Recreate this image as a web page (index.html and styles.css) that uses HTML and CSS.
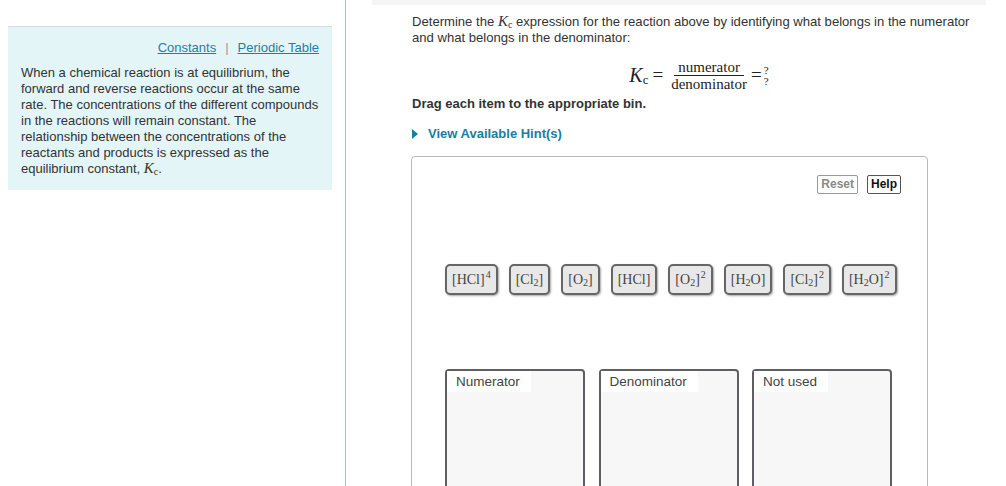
FILE: index.html
```html
<!DOCTYPE html>
<html>
<head>
<meta charset="utf-8">
<link rel="stylesheet" href="styles.css">
</head>
<body>
<div class="page">
  <aside class="left">
    <div class="info">
      <div class="links"><a href="#">Constants</a><span class="sep">|</span><a href="#">Periodic Table</a></div>
      <p class="intro">When a chemical reaction is at equilibrium, the forward and reverse reactions occur at the same rate. The concentrations of the different compounds in the reactions will remain constant. The relationship between the concentrations of the reactants and products is expressed as the equilibrium constant, <span class="m"><i>K</i><sub>c</sub></span>.</p>
    </div>
  </aside>
  <main class="right">
    <div class="topbar"></div>
    <div class="content">
      <p class="q">Determine the <span class="m"><i>K</i><sub>c</sub></span> expression for the reaction above by identifying what belongs in the numerator and what belongs in the denominator:</p>
      <div class="formula">
        <span class="m big"><i>K</i><sub>c</sub></span><span class="eq">=</span>
        <span class="frac"><span class="num">numerator</span><span class="den">denominator</span></span>
        <span class="eq">=</span>
        <span class="frac small"><span class="num">?</span><span class="den">?</span></span>
      </div>
      <p class="drag">Drag each item to the appropriate bin.</p>
      <div class="hint"><span class="tri"></span>View Available Hint(s)</div>
      <div class="dnd">
        <div class="tools"><button class="btn reset">Reset</button><button class="btn help">Help</button></div>
        <div class="items">
          <span class="item">[HCl]<sup>4</sup></span>
          <span class="item">[Cl<sub>2</sub>]</span>
          <span class="item">[O<sub>2</sub>]</span>
          <span class="item">[HCl]</span>
          <span class="item">[O<sub>2</sub>]<sup>2</sup></span>
          <span class="item">[H<sub>2</sub>O]</span>
          <span class="item">[Cl<sub>2</sub>]<sup>2</sup></span>
          <span class="item">[H<sub>2</sub>O]<sup>2</sup></span>
        </div>
        <div class="bins">
          <div class="bin"><span class="label">Numerator</span></div>
          <div class="bin"><span class="label">Denominator</span></div>
          <div class="bin"><span class="label">Not used</span></div>
        </div>
      </div>
    </div>
  </main>
</div>
</body>
</html>
```

FILE: styles.css
```css
* { box-sizing: border-box; }
html, body { margin: 0; padding: 0; background: #fff; }
body { font-family: "Liberation Sans", Arial, sans-serif; font-size: 13px; color: #333; }
.page { display: flex; height: 486px; overflow: hidden; }
.left { width: 346px; flex: none; border-right: 1px solid #b3bfd3; padding: 26px 13px 0 8px; }
.info { background: #e4f5f7; border-top: 1px solid #d6dde0; padding: 13px 13px 13px 13px; }
.links { text-align: right; line-height: 16px; margin-bottom: 9px; }
.links a { color: #1f7ea6; text-decoration: underline; }
.sep { color: #999; margin: 0 9px; }
.intro { margin: 0; line-height: 16px; color: #333; }
.m { font-family: "Liberation Serif", "DejaVu Serif", serif; font-size: 15px; line-height: 0; }
.m i { font-style: italic; }
.m sub { font-size: 10px; font-style: normal; vertical-align: -2px; line-height: 0; }
.right { flex: 1; min-width: 0; }
.topbar { margin-left: 26px; width: 614px; height: 5px; background: #f5f5f5; }
.content { padding-left: 66px; width: 640px; }
.q { margin: 9px 0 0 0; line-height: 16px; font-size: 13.1px; }
.formula { display: flex; align-items: center; justify-content: center; height: 32px; margin-top: 13px; font-family: "Liberation Serif", "DejaVu Serif", serif; color: #222; }
.formula .big { font-size: 20px; line-height: 1; }
.formula .big sub { font-size: 13px; }
.eq { font-size: 19px; margin: 0 6px 0 4px; }
.frac { display: inline-flex; flex-direction: column; align-items: center; font-size: 15px; line-height: 14px; margin-left: 2px; }
.frac .num { border-bottom: 1px solid #222; padding: 0 4px 1px; }
.frac .den { padding-top: 1px; }
.frac.small { font-size: 11px; line-height: 10px; margin-left: -4px; }
.frac.small .num { border-bottom: none; padding: 0; }
.drag { margin: 5px 0 0 0; font-weight: bold; line-height: 16px; }
.hint { margin-top: 14px; line-height: 16px; font-weight: bold; color: #16809f; display: flex; align-items: center; }
.tri { width: 0; height: 0; border-left: 6px solid #16809f; border-top: 5px solid transparent; border-bottom: 5px solid transparent; margin: 0 10px 0 0; }
.dnd { margin-top: 14px; margin-left: -1px; width: 517px; height: 340px; border: 1px solid #b9b9b9; border-radius: 4px; padding: 18px 26px 0 33px; }
.tools { display: flex; justify-content: flex-end; gap: 9px; }
.btn { height: 19px; padding: 0 3px; font-family: "Liberation Sans", Arial, sans-serif; font-size: 12px; font-weight: bold; background: #fff; border-radius: 2px; line-height: 15px; }
.btn.reset { color: #8a8a8a; border: 1px solid #9a9a9a; }
.btn.help { color: #111; border: 1px solid #555; }
.items { display: flex; justify-content: flex-start; gap: 11px; margin: 70px -26px 0 0; }
.item { display: inline-block; height: 31px; line-height: 27px; padding: 0 5px; background: #e8e8e8; border: 2px solid #666; border-radius: 5px; box-shadow: 1px 1px 2px rgba(0,0,0,0.35); font-family: "Liberation Serif", "DejaVu Serif", serif; font-size: 14px; color: #444; white-space: nowrap; }
.item sub { font-size: 10px; vertical-align: -2px; line-height: 0; }
.item sup { font-size: 10px; vertical-align: 6px; line-height: 0; margin-left: 1px; }
.bins { display: flex; justify-content: flex-start; gap: 13.5px; margin: 74px -26px 0 0; }
.bin { width: 140px; height: 140px; background: #f7f7f7; border: 2px solid #5e5e63; border-radius: 4px; padding: 0; }
.label { display: inline-block; background: #fff; padding: 3px 11px 2px 9px; line-height: 16px; font-size: 13.5px; color: #444; }
```
